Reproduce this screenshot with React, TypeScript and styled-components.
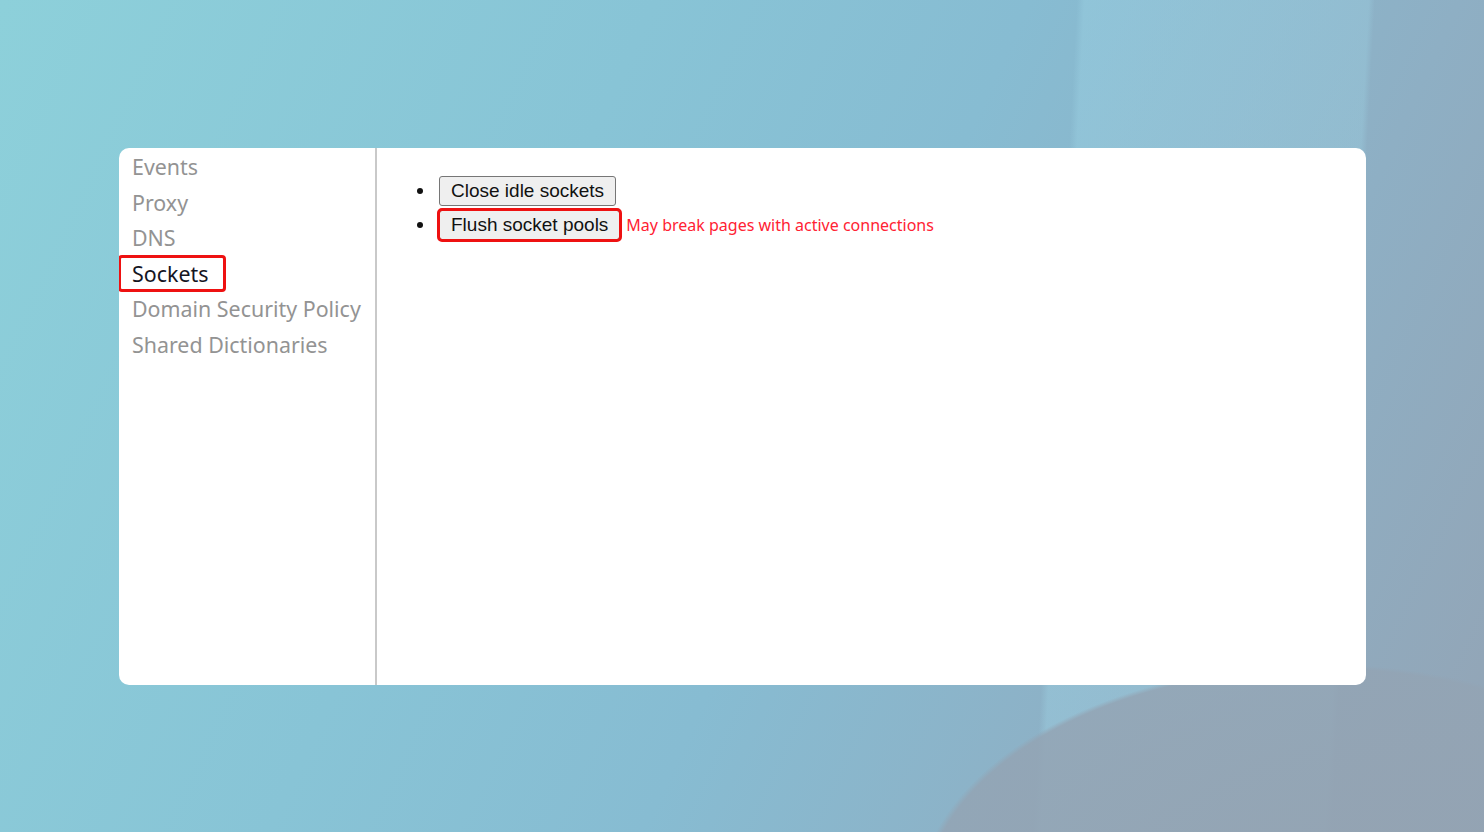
import React from "react";
import styled, { createGlobalStyle } from "styled-components";

const GlobalStyle = createGlobalStyle`
  html, body {
    margin: 0;
    padding: 0;
    width: 1484px;
    height: 832px;
    overflow: hidden;
  }
  body {
    background-color: #8dbfd2;
    background-image:
      radial-gradient(ellipse 720px 430px at 1320px 905px, rgba(148, 163, 178, 0.95) 0%, rgba(147, 164, 180, 0.85) 55%, rgba(148, 164, 180, 0) 56%),
      linear-gradient(93deg, rgba(255,255,255,0) 70.5%, rgba(160, 215, 232, 0.35) 71%, rgba(160, 215, 232, 0.3) 89.6%, rgba(255,255,255,0) 90%),
      linear-gradient(115deg, #8dd0da 0%, #88c4d6 35%, #87bcd2 55%, #8eafc4 78%, #93a4b5 100%);
  }
`;

const Page = styled.div`
  box-sizing: border-box;
  width: 1484px;
  height: 832px;
  padding: 148px 0 0 119px;
`;

const Card = styled.div`
  width: 1247px;
  height: 537px;
  background: #ffffff;
  border-radius: 10px;
  display: grid;
  grid-template-columns: 258px 1fr;
  overflow: hidden;
`;

const Sidebar = styled.nav`
  border-right: 2px solid #c9c9c9;
  padding-top: 1px;
  display: flex;
  flex-direction: column;
  align-items: flex-start;
  min-width: 0;
`;

const NavItem = styled.div<{ $active?: boolean }>`
  font-family: "Noto Sans", "Open Sans", sans-serif;
  font-size: 21.4px;
  line-height: 35.6px;
  height: 35.6px;
  white-space: nowrap;
  padding: 0 ${(p) => (p.$active ? "17px" : "0")} 0 13px;
  color: ${(p) => (p.$active ? "#15151f" : "#939393")};
  ${(p) =>
    p.$active
      ? `outline: 3px solid #ee1111; outline-offset: -2px; border-radius: 3px;`
      : ""}
`;

const Content = styled.main`
  padding: 28px 0 0 40px;
`;

const List = styled.ul`
  list-style: none;
  margin: 0;
  padding: 0;
  display: flex;
  flex-direction: column;
  gap: 3.5px;
`;

const Row = styled.li`
  display: flex;
  align-items: center;
  height: 30px;
`;

const Bullet = styled.span`
  width: 6px;
  height: 6px;
  border-radius: 50%;
  background: #111;
  margin-right: 16px;
  flex: none;
`;

const Button = styled.button<{ $flagged?: boolean }>`
  box-sizing: border-box;
  height: 30px;
  padding: 0 11px;
  font-family: "Liberation Sans", Arial, sans-serif;
  font-size: 19px;
  color: #111;
  background: #efefef;
  border: 1.5px solid #767676;
  border-radius: 3px;
  ${(p) =>
    p.$flagged
      ? `outline: 3px solid #ee1111; outline-offset: -1px; border-radius: 3px;`
      : ""}
`;

const Warning = styled.span`
  margin-left: 6px;
  font-family: "Noto Sans", "Open Sans", sans-serif;
  font-size: 16px;
  white-space: nowrap;
  color: #ff2233;
`;

const navItems = [
  "Events",
  "Proxy",
  "DNS",
  "Sockets",
  "Domain Security Policy",
  "Shared Dictionaries",
];

export default function App() {
  return (
    <>
      <GlobalStyle />
      <Page>
        <Card>
          <Sidebar>
            {navItems.map((item) => (
              <NavItem key={item} $active={item === "Sockets"}>
                {item}
              </NavItem>
            ))}
          </Sidebar>
          <Content>
            <List>
              <Row>
                <Bullet />
                <Button>Close idle sockets</Button>
              </Row>
              <Row>
                <Bullet />
                <Button $flagged>Flush socket pools</Button>
                <Warning>May break pages with active connections</Warning>
              </Row>
            </List>
          </Content>
        </Card>
      </Page>
    </>
  );
}
